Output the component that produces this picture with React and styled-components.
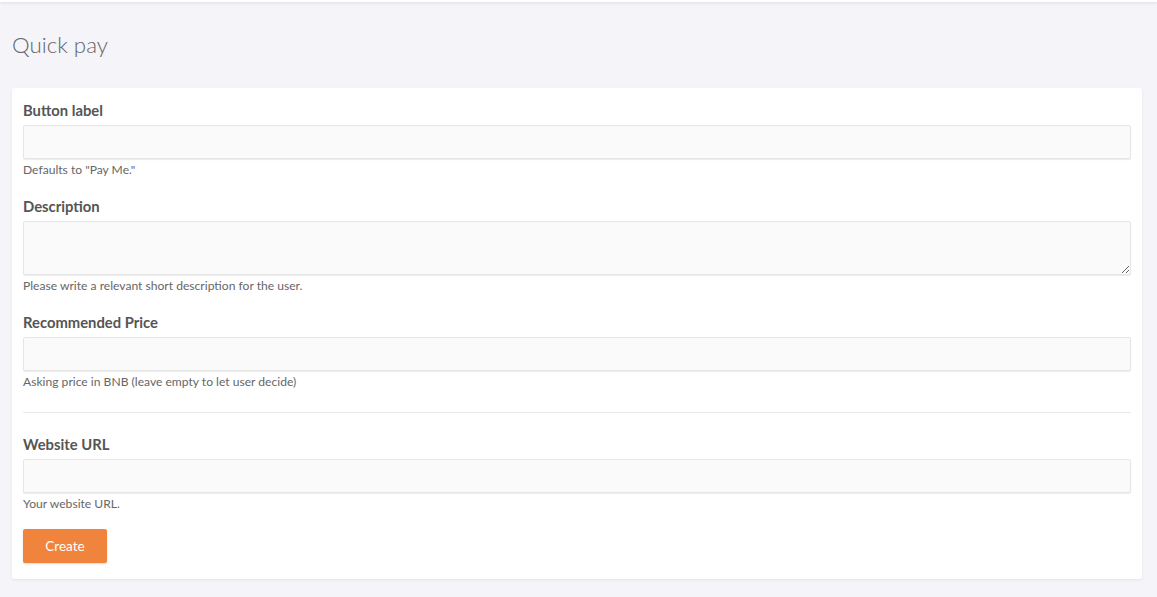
import React from "react";
import styled, { createGlobalStyle } from "styled-components";

const Global = createGlobalStyle`
  html, body { margin: 0; padding: 0; background: #f4f4f9; }
  body { font-family: Lato, "Noto Sans", sans-serif; color: #555; }
  * { box-sizing: border-box; }
`;

const TopBar = styled.div`
  height: 2px;
  background: #fff;
  box-shadow: 0 1px 3px rgba(0, 0, 0, 0.12);
`;

const Page = styled.div`
  padding: 0 15px 18px 12px;
`;

const Title = styled.h1`
  margin: 0;
  padding: 28px 0 28px;
  font-size: 22.3px;
  line-height: 30px;
  font-weight: 300;
  color: #666;
`;

const Card = styled.form`
  background: #fff;
  border-radius: 3px;
  box-shadow: 0 1px 3px rgba(0, 0, 0, 0.07);
  padding: 12px 11px 16px;
  display: flex;
  flex-direction: column;
`;

const Group = styled.div`
  display: flex;
  flex-direction: column;
  margin-bottom: 17px;
`;

const Label = styled.label`
  font-size: 14.8px;
  line-height: 20px;
  font-weight: 700;
  color: #555;
  margin-bottom: 5px;
`;

const fieldCss = `
  width: 100%;
  border: 1px solid #e6e6e6;
  background: #fafafa;
  border-radius: 2px;
  box-shadow: 0 1px 1px rgba(0, 0, 0, 0.08);
  font-family: inherit;
  font-size: 13px;
  padding: 6px 10px;
  outline: none;
  display: block;
`;

const Input = styled.input`
  ${fieldCss}
  height: 34px;
`;

const TextArea = styled.textarea`
  ${fieldCss}
  height: 54px;
  resize: vertical;
`;

const Help = styled.span`
  margin-top: 2px;
  font-size: 12.1px;
  line-height: 18px;
  color: #666;
`;

const Divider = styled.hr`
  border: 0;
  border-top: 1px solid #e8e8e8;
  margin: 4px 0 21px;
  width: 100%;
`;

const Button = styled.button`
  align-self: flex-start;
  width: 84px;
  height: 34px;
  border: 0;
  border-radius: 2px;
  background: #f0843c;
  color: #fff;
  font-family: inherit;
  font-size: 13.5px;
  box-shadow: 0 1px 2px rgba(0, 0, 0, 0.15);
  cursor: pointer;
  margin-top: -1px;
`;

const Field = ({ label, help, area }) => (
  <Group>
    <Label>{label}</Label>
    {area ? <TextArea /> : <Input />}
    <Help>{help}</Help>
  </Group>
);

export default function App() {
  return (
    <>
      <Global />
      <TopBar />
      <Page>
        <Title>Quick pay</Title>
        <Card onSubmit={(e) => e.preventDefault()}>
          <Field label="Button label" help={'Defaults to "Pay Me."'} />
          <Field
            label="Description"
            help="Please write a relevant short description for the user."
            area
          />
          <Field
            label="Recommended Price"
            help="Asking price in BNB (leave empty to let user decide)"
          />
          <Divider />
          <Field label="Website URL" help="Your website URL." />
          <Button type="submit">Create</Button>
        </Card>
      </Page>
    </>
  );
}
